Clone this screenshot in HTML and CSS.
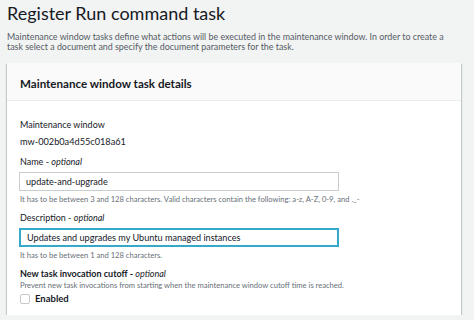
FILE: index.html
```html
<!DOCTYPE html>
<html lang="en">
<head>
<meta charset="utf-8">
<title>Register Run command task</title>
<link rel="stylesheet" href="styles.css">
</head>
<body>
<main class="page">
  <h1 class="title">Register Run command task</h1>
  <p class="intro">Maintenance window tasks define what actions will be executed in the maintenance window. In order to create a task select a document and specify the document parameters for the task.</p>
  <section class="card">
    <header class="card-header">Maintenance window task details</header>
    <div class="card-body">
      <div class="field">
        <div class="label">Maintenance window</div>
        <div class="value">mw-002b0a4d55c018a61</div>
      </div>
      <div class="field">
        <div class="label">Name - <i>optional</i></div>
        <div class="input">update-and-upgrade</div>
        <div class="hint">It has to be between 3 and 128 characters. Valid characters contain the following: a-z, A-Z, 0-9, and ._-</div>
      </div>
      <div class="field">
        <div class="label">Description - <i>optional</i></div>
        <div class="input focused">Updates and upgrades my Ubuntu managed instances</div>
        <div class="hint">It has to be between 1 and 128 characters.</div>
      </div>
      <div class="field">
        <div class="label strong">New task invocation cutoff - <i>optional</i></div>
        <div class="hint desc">Prevent new task invocations from starting when the maintenance window cutoff time is reached.</div>
        <label class="check"><span class="box"></span><span class="check-text">Enabled</span></label>
      </div>
    </div>
  </section>
</main>
</body>
</html>
```
FILE: styles.css
```css
html, body {
  margin: 0;
  padding: 0;
  background: #f2f3f3;
  font-family: Lato, "Open Sans", sans-serif;
  color: #16191f;
}
.page {
  padding: 1px 13px 0 7px;
}
.title {
  margin: 0;
  font-size: 18px;
  font-weight: 400;
  line-height: 24px;
  color: #16191f;
}
.intro {
  margin: 7px 0 0;
  font-size: 8.9px;
  line-height: 10px;
  color: #545b64;
  max-width: 452px;
}
.card {
  margin-top: 11px;
  background: #fff;
  box-shadow: 0 1px 1px 0 rgba(0, 28, 36, 0.3), 1px 1px 1px 0 rgba(0, 28, 36, 0.15), -1px 1px 1px 0 rgba(0, 28, 36, 0.15);
  height: 252px;
}
.card-header {
  background: #fafafa;
  border-bottom: 1px solid #eaeded;
  padding: 13px 13px 9px;
  font-size: 11.6px;
  font-weight: 700;
  line-height: 15px;
}
.card-body {
  padding: 18px 12px 0 12px;
  display: flex;
  flex-direction: column;
}
.field {
  display: flex;
  flex-direction: column;
}
.field + .field {
  margin-top: 8px;
}
.label {
  font-size: 9px;
  line-height: 12px;
  padding-left: 1px;
  color: #16191f;
}
.label.strong {
  font-weight: 700;
}
.label i {
  font-weight: 400;
}
.value {
  margin-top: 5px;
  font-size: 9.2px;
  line-height: 12px;
  padding-left: 1px;
}
.input {
  margin-top: 4px;
  width: 320px;
  box-sizing: border-box;
  height: 19px;
  border: 1px solid #c8cdcd;
  padding: 0 6px;
  font-size: 9.1px;
  line-height: 17px;
  color: #16191f;
}
.input.focused {
  border: 2px solid #35a9c9;
  line-height: 15px;
  padding: 0 6px;
  font-size: 9.1px;
}
.hint {
  margin-top: 3px;
  font-size: 7.6px;
  line-height: 10px;
  color: #687078;
  padding-left: 1px;
}
.hint.desc {
  margin-top: 0;
  font-size: 7.6px;
}
.check {
  margin-top: 3px;
  display: flex;
  align-items: center;
  gap: 5px;
  padding-left: 1px;
}
.box {
  width: 8px;
  height: 8px;
  border: 1px solid #c4c9c9;
  border-radius: 2px;
  background: #fff;
}
.check-text {
  font-size: 9.5px;
  font-weight: 700;
  color: #16191f;
  line-height: 11px;
}
```
